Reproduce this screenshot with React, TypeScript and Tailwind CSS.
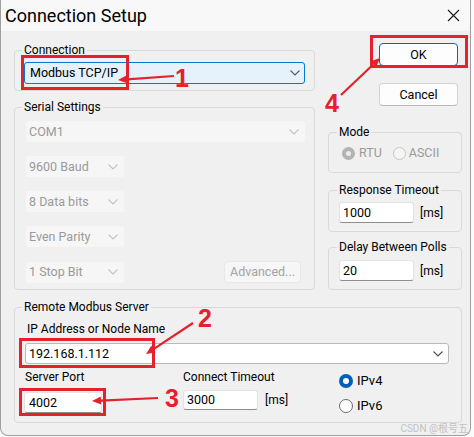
import React from "react";

const RED = "#e5212d";

function Chevron({ color }: { color: string }) {
  return (
    <svg width="10" height="6" viewBox="0 0 10 6" fill="none">
      <polyline points="0.5,0.5 5,5 9.5,0.5" stroke={color} strokeWidth="1.1" />
    </svg>
  );
}

function DisabledCombo({ label, wide }: { label: string; wide?: boolean }) {
  return (
    <div
      className={`h-[21px] ${wide ? "w-[279px]" : "w-[98px]"} ml-[2px] bg-[#f6f6f6] rounded-[3px] flex items-center justify-between pl-[3px] pr-[6px] text-[12.5px] text-[#9a9a9a]`}
    >
      <span>{label}</span>
      <Chevron color="#c4c4c4" />
    </div>
  );
}

function TextInput({ value, className }: { value: string; className: string }) {
  return (
    <div
      className={`bg-white border border-[#e3e3e3] border-b-[#8d8d8d] rounded-[3px] flex items-center pl-[3px] text-[12.5px] ${className}`}
    >
      {value}
    </div>
  );
}

function Radio({ checked, label }: { checked: boolean; label: string }) {
  return (
    <div className="flex items-center h-[16px]">
      {checked ? (
        <span className="w-[14px] h-[14px] rounded-full bg-[#005fb8] flex items-center justify-center">
          <span className="w-[6px] h-[6px] rounded-full bg-white" />
        </span>
      ) : (
        <span className="w-[14px] h-[14px] rounded-full border border-[#6b6b6b] bg-white" />
      )}
      <span className="ml-[4px] text-[13px]">{label}</span>
    </div>
  );
}

function Arrow({ x1, y1, x2, y2 }: { x1: number; y1: number; x2: number; y2: number }) {
  const a = Math.atan2(y2 - y1, x2 - x1);
  const len = 9;
  const hw = 4;
  const bx = x2 - len * Math.cos(a);
  const by = y2 - len * Math.sin(a);
  const px = -Math.sin(a) * hw;
  const py = Math.cos(a) * hw;
  return (
    <g>
      <line x1={x1} y1={y1} x2={bx} y2={by} stroke={RED} strokeWidth="2.2" />
      <polygon points={`${x2},${y2} ${bx + px},${by + py} ${bx - px},${by - py}`} fill={RED} />
    </g>
  );
}

export default function App() {
  return (
    <div className="w-[474px] h-[437px] bg-[#fbfbfb]">
      <div className="relative w-[471px] h-[436px] bg-[#f0f0f0] border-x border-b border-[#9f9f9f] rounded-b-[8px] overflow-hidden font-['Roboto',sans-serif] text-[12px] leading-[16px] text-black">
        {/* Title bar */}
        <div className="h-[31px] bg-[#f8f8f8] flex items-center justify-between pl-[4px] pr-[10px]">
          <span className="text-[18px] leading-[20px]">Connection Setup</span>
          <svg width="13" height="13" viewBox="0 0 13 13">
            <path d="M1 1L12 12M12 1L1 12" stroke="#1a1a1a" strokeWidth="1.1" />
          </svg>
        </div>

        <div className="pl-[13px] pt-[11px]">
          <div className="flex">
            {/* Left column */}
            <div className="w-[301px] flex flex-col">
              <fieldset className="border border-[#d9d9d9] rounded-[4px] px-[9px] pt-[4px] pb-[6px]">
                <legend className="px-[2px] -ml-[2px] whitespace-nowrap">Connection</legend>
                <div className="h-[22px] bg-[#e5f1fb] border border-[#0078d4] rounded-[3px] flex items-center justify-between pl-[5px] pr-[4px] text-[12.5px]">
                  <span>Modbus TCP/IP</span>
                  <Chevron color="#5c5c5c" />
                </div>
              </fieldset>

              <fieldset className="mt-[8px] border border-[#d9d9d9] rounded-[4px] px-[9px] pt-[6px] pb-[6px]">
                <legend className="px-[2px] -ml-[2px] whitespace-nowrap">Serial Settings</legend>
                <DisabledCombo label="COM1" wide />
                <div className="mt-[14px]">
                  <DisabledCombo label="9600 Baud" />
                </div>
                <div className="mt-[14px]">
                  <DisabledCombo label="8 Data bits" />
                </div>
                <div className="mt-[14px]">
                  <DisabledCombo label="Even Parity" />
                </div>
                <div className="mt-[14px] flex items-center justify-between">
                  <DisabledCombo label="1 Stop Bit" />
                  <div className="w-[77px] h-[22px] mr-[4px] bg-[#f6f6f6] border border-[#e8e8e8] rounded-[4px] flex items-center justify-center text-[12.5px] text-[#a3a3a3]">
                    Advanced...
                  </div>
                </div>
              </fieldset>
            </div>

            {/* Right column */}
            <div className="ml-[13px] w-[134px] flex flex-col">
              <div className="mt-[1px] ml-[51px] w-[79px] h-[23px] bg-[#fdfdfd] border border-[#0067c0] rounded-[4px] flex items-center justify-center text-[12.5px]">
                OK
              </div>
              <div className="mt-[17px] ml-[51px] w-[79px] h-[23px] bg-[#fdfdfd] border border-[#d3d3d3] border-b-[#b8b8b8] rounded-[4px] flex items-center justify-center text-[12.5px]">
                Cancel
              </div>

              <fieldset className="mt-[18px] border border-[#d9d9d9] rounded-[4px] px-[10px] pt-[5px] pb-[11px]">
                <legend className="px-[2px] -ml-[2px] whitespace-nowrap">Mode</legend>
                <div className="flex items-center h-[16px] pl-[3px] text-[12.5px] text-[#9a9a9a]">
                  <span className="w-[13px] h-[13px] rounded-full bg-[#b3b3b3] flex items-center justify-center">
                    <span className="w-[5px] h-[5px] rounded-full bg-[#ececec]" />
                  </span>
                  <span className="ml-[4px]">RTU</span>
                  <span className="ml-[11px] w-[13px] h-[13px] rounded-full border border-[#c6c6c6] bg-[#f5f5f5]" />
                  <span className="ml-[3px]">ASCII</span>
                </div>
              </fieldset>

              <fieldset className="mt-[9px] border border-[#d9d9d9] rounded-[4px] px-[10px] pt-[4px] pb-[8px]">
                <legend className="px-[2px] -ml-[2px] whitespace-nowrap">Response Timeout</legend>
                <div className="flex items-center">
                  <TextInput value="1000" className="w-[75px] h-[21px]" />
                  <span className="ml-[6px]">[ms]</span>
                </div>
              </fieldset>

              <fieldset className="mt-[7px] border border-[#d9d9d9] rounded-[4px] px-[10px] pt-[5px] pb-[8px]">
                <legend className="px-[2px] -ml-[2px] whitespace-nowrap">Delay Between Polls</legend>
                <div className="flex items-center">
                  <TextInput value="20" className="w-[75px] h-[21px]" />
                  <span className="ml-[6px]">[ms]</span>
                </div>
              </fieldset>
            </div>
          </div>

          {/* Remote server */}
          <fieldset className="mt-[9px] w-[448px] border border-[#d9d9d9] rounded-[4px] px-[9px] pt-[6px] pb-[8px]">
            <legend className="px-[2px] -ml-[2px] whitespace-nowrap">Remote Modbus Server</legend>
            <div className="ml-[3px]">IP Address or Node Name</div>
            <div className="mt-[6px] ml-[1px] mr-[3px] h-[21px] bg-white border border-[#b9b9b9] rounded-[3px] flex items-center justify-between pl-[3px] pr-[5px] text-[12.5px]">
              <span>192.168.1.112</span>
              <Chevron color="#4f4f4f" />
            </div>
            <div className="flex">
              <div className="w-[159px] flex flex-col">
                <div className="mt-[5px] ml-[1px]">Server Port</div>
                <TextInput value="4002" className="mt-[7px] w-[78px] h-[21px] pl-[4px]" />
              </div>
              <div className="w-[156px] flex flex-col">
                <div className="mt-[5px]">Connect Timeout</div>
                <div className="mt-[5px] flex items-center">
                  <TextInput value="3000" className="w-[75px] h-[20px]" />
                  <span className="ml-[7px]">[ms]</span>
                </div>
              </div>
              <div className="flex flex-col">
                <div className="mt-[9px]">
                  <Radio checked label="IPv4" />
                </div>
                <div className="mt-[9px]">
                  <Radio checked={false} label="IPv6" />
                </div>
              </div>
            </div>
          </fieldset>
        </div>

        {/* Watermark */}
        <span className="absolute right-[2px] bottom-[0px] text-[10px] leading-[12px] text-[#c2c2c2] font-['Roboto','Noto_Sans_CJK_SC',sans-serif]">
          CSDN @根号五
        </span>

        {/* Annotations */}
        <svg className="absolute left-[-1px] top-0" width="474" height="437" viewBox="0 0 474 437">
          <rect x="22.5" y="56.5" width="105" height="32" fill="none" stroke={RED} strokeWidth="3" />
          <rect x="371.5" y="36.5" width="95" height="30" fill="none" stroke={RED} strokeWidth="3" />
          <rect x="20.5" y="339.5" width="133" height="27" fill="none" stroke={RED} strokeWidth="3" />
          <rect x="20.5" y="389.5" width="84" height="25" fill="none" stroke={RED} strokeWidth="3" />
          <Arrow x1={174} y1={76} x2={118} y2={80} />
          <Arrow x1={341} y1={95} x2={380} y2={58} />
          <Arrow x1={193} y1={323} x2={146} y2={354} />
          <Arrow x1={158} y1={398} x2={92} y2={401} />
          <g fill={RED} fontFamily="'Liberation Sans', Arial, sans-serif" fontWeight="bold" fontSize="25">
            <text x="175" y="87">1</text>
            <text x="198" y="327">2</text>
            <text x="165" y="407">3</text>
            <text x="325" y="112">4</text>
          </g>
        </svg>
      </div>
    </div>
  );
}
